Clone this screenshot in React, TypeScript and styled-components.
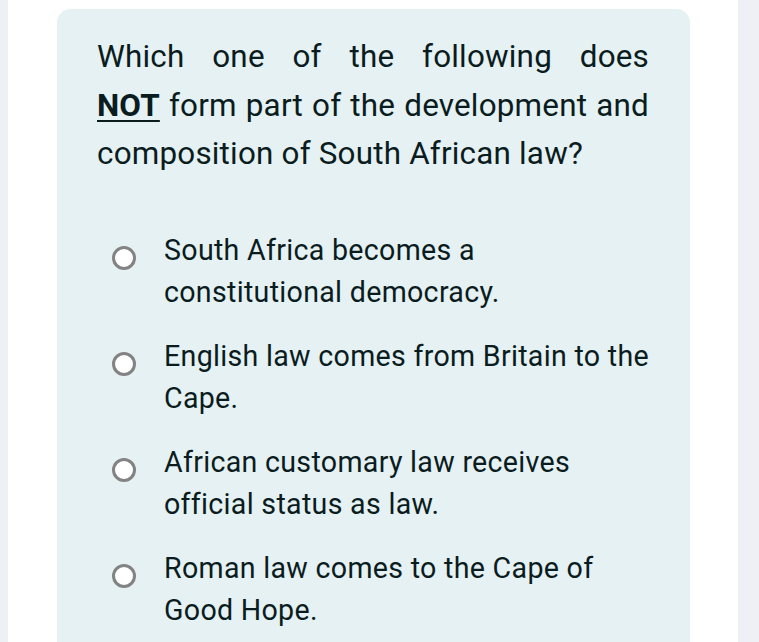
import React from "react";
import styled, { createGlobalStyle } from "styled-components";

const Global = createGlobalStyle`
  html, body { margin: 0; padding: 0; background: #ffffff; }
  body { font-family: Roboto, "Liberation Sans", sans-serif; }
`;

const Page = styled.div`
  display: grid;
  grid-template-columns: 8px 1fr 21px;
  height: 642px;
  overflow: hidden;
`;

const SideStrip = styled.div`
  background: #eff0f5;
`;

const Main = styled.div`
  background: #ffffff;
  padding: 9px 48px 0 49px;
`;

const Card = styled.div`
  background: #e5f1f3;
  border-radius: 14px 14px 0 0;
  padding: 24px 41px 40px 40px;
  min-height: 700px;
  box-sizing: border-box;
`;

const Question = styled.div`
  font-size: 31.4px;
  letter-spacing: 0.2px;
  line-height: 48.5px;
  color: #0b1c1e;
`;

const QuestionLine = styled.span<{ $stretch?: boolean }>`
  display: block;
  text-align: justify;
  text-align-last: ${(p) => (p.$stretch ? "justify" : "auto")};
`;

const Emph = styled.span`
  font-weight: 700;
  text-decoration: underline;
  text-decoration-thickness: 2px;
  text-underline-offset: 4px;
`;

const Options = styled.div`
  display: flex;
  flex-direction: column;
  gap: 21px;
  margin-top: 50px;
  margin-right: -3px;
`;

const Option = styled.label`
  display: flex;
  align-items: flex-start;
  gap: 28px;
  padding-left: 15px;
  cursor: pointer;
`;

const Radio = styled.span`
  flex: none;
  width: 24px;
  height: 24px;
  margin-top: 17px;
  border-radius: 50%;
  border: 3px solid #838383;
  background: #ffffff;
  box-sizing: border-box;
`;

const OptionText = styled.span`
  font-size: 28.6px;
  letter-spacing: 0.3px;
  line-height: 42.5px;
  color: #0b1c1e;
`;

const options = [
  "South Africa becomes a constitutional democracy.",
  "English law comes from Britain to the Cape.",
  "African customary law receives official status as law.",
  "Roman law comes to the Cape of Good Hope.",
];

export default function App() {
  return (
    <>
      <Global />
      <Page>
        <SideStrip />
        <Main>
          <Card>
            <Question>
              <QuestionLine $stretch>Which one of the following does</QuestionLine>
              <QuestionLine>
                <Emph>NOT</Emph> form part of the development and composition
                of South African law?
              </QuestionLine>
            </Question>
            <Options>
              {options.map((o) => (
                <Option key={o}>
                  <Radio />
                  <OptionText>{o}</OptionText>
                </Option>
              ))}
            </Options>
          </Card>
        </Main>
        <SideStrip />
      </Page>
    </>
  );
}
